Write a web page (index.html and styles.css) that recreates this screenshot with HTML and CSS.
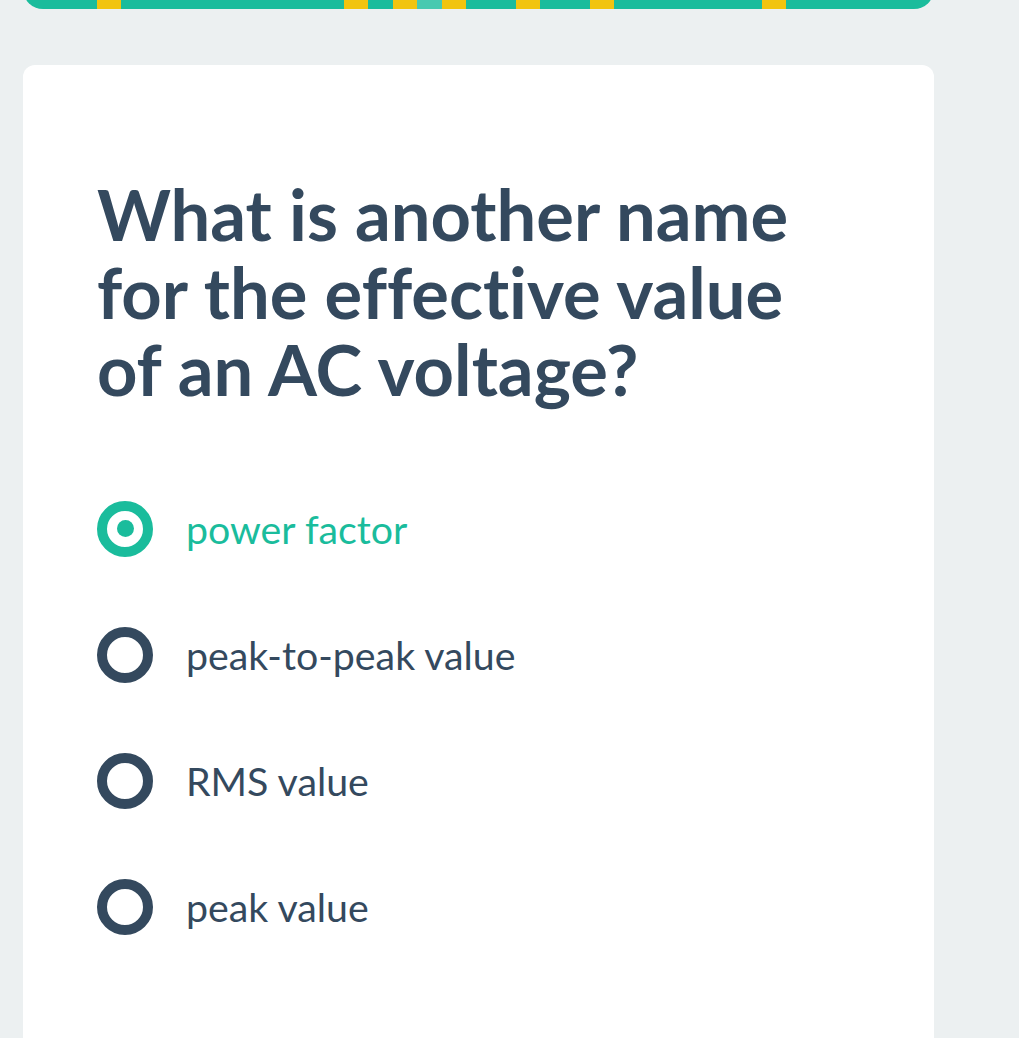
FILE: index.html
```html
<!DOCTYPE html>
<html>
<head>
<meta charset="utf-8">
<link rel="stylesheet" href="styles.css">
</head>
<body>
<div class="page">
  <div class="progress">
    <span class="mark" style="left:74px"></span>
    <span class="mark" style="left:321px"></span>
    <span class="mark" style="left:370px"></span>
    <span class="mark current" style="left:394px"></span>
    <span class="mark" style="left:419px"></span>
    <span class="mark" style="left:493px"></span>
    <span class="mark" style="left:567px"></span>
    <span class="mark" style="left:739px"></span>
  </div>
  <div class="card">
    <h1 class="question">What is another name<br>for the effective value<br>of an AC voltage?</h1>
    <ul class="options">
      <li class="option selected"><span class="radio"></span><span class="label">power factor</span></li>
      <li class="option"><span class="radio"></span><span class="label">peak-to-peak value</span></li>
      <li class="option"><span class="radio"></span><span class="label">RMS value</span></li>
      <li class="option"><span class="radio"></span><span class="label">peak value</span></li>
    </ul>
  </div>
</div>
</body>
</html>
```
FILE: styles.css
```css
html, body {
  margin: 0;
  padding: 0;
  background: #ecf0f1;
  overflow: hidden;
}
body {
  font-family: Lato, "Open Sans", sans-serif;
  color: #34495e;
  font-variant-ligatures: none;
}
.page {
  width: 911px;
  margin-left: 23px;
}
.progress {
  position: relative;
  height: 40px;
  margin-top: -31px;
  background: #1abc9c;
  border-radius: 20px;
  overflow: hidden;
}
.mark {
  position: absolute;
  top: 0;
  bottom: 0;
  width: 24px;
  background: #f1c40f;
}
.mark.current {
  width: 25px;
  background: linear-gradient(60deg, #48c9b0 0 78%, #1abc9c 78%);
}
.card {
  margin-top: 56px;
  background: #fff;
  border-radius: 12px 12px 0 0;
  padding: 110px 74px 80px 74px;
  min-height: 900px;
}
.question {
  margin: 0;
  font-weight: 700;
  font-size: 70.5px;
  line-height: 77.5px;
  letter-spacing: 0;
}
.options {
  list-style: none;
  margin: 93px 0 0 0;
  padding: 0;
  display: flex;
  flex-direction: column;
  gap: 70px;
}
.option {
  display: flex;
  align-items: center;
  gap: 33px;
  height: 56px;
}
.radio {
  box-sizing: border-box;
  width: 56px;
  height: 56px;
  border-radius: 50%;
  border: 10.5px solid #34495e;
  flex: none;
  display: flex;
  align-items: center;
  justify-content: center;
}
.label {
  font-size: 39.3px;
  line-height: 56px;
}
.selected .radio {
  border-color: #1abc9c;
}
.selected .radio::after {
  content: "";
  width: 17px;
  height: 17px;
  border-radius: 50%;
  background: #1abc9c;
}
.selected .label {
  color: #1abc9c;
}
```
